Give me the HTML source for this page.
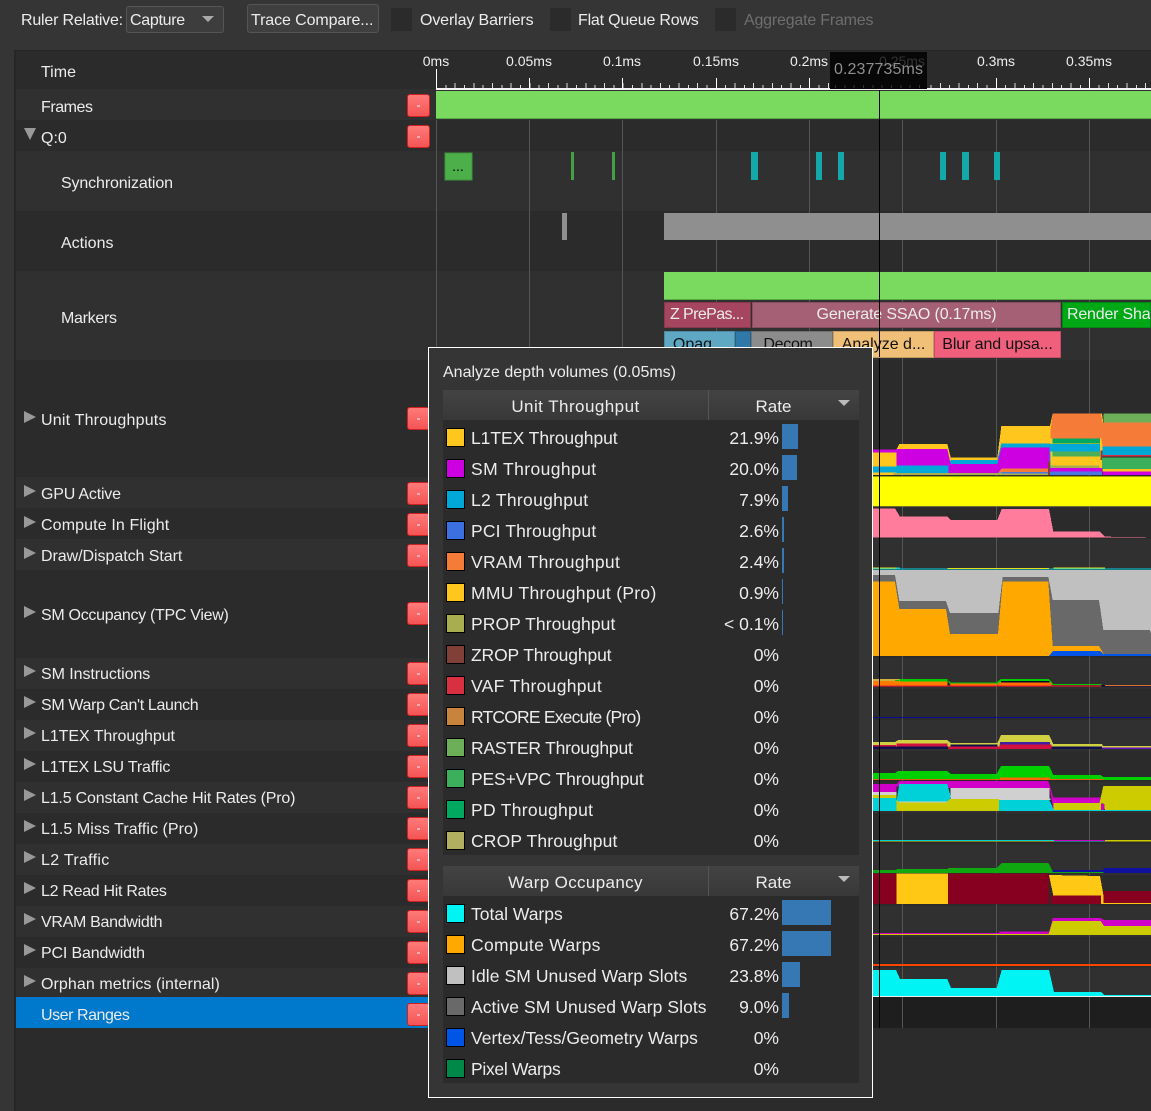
<!DOCTYPE html>
<html><head><meta charset="utf-8"><style>
html,body{margin:0;padding:0;background:#353535;width:1151px;height:1111px;overflow:hidden;font-family:"Liberation Sans",sans-serif;font-size:16px;color:#ececec}
#p{position:absolute;left:0;top:0;width:1151px;height:1111px;overflow:hidden}
#p div,#p span.a{position:absolute;white-space:nowrap}
.l{height:24px;line-height:24px;margin-top:2px}
.t{height:20px;line-height:20px;font-size:14px;width:80px;text-align:center;margin-left:-40px;color:#eee}
.b{left:407px;width:21px;height:21px;background:linear-gradient(#ff7a7a,#f45454);border:1px solid #c22;border-radius:3px;color:#fff;font-size:12px;text-align:center;line-height:20px}
.ar{left:24px;width:0;height:0;border-left:12px solid #999;border-top:6px solid transparent;border-bottom:6px solid transparent}
.m{height:26px;line-height:24px;text-align:center;overflow:hidden;box-sizing:border-box;border:1px solid rgba(0,0,0,.18)}
.h{height:30px;line-height:33px;background:linear-gradient(#434343,#383838);text-align:center;border-right:1px solid #555;box-sizing:border-box;font-size:17px}
.s{left:446px;width:17px;height:17px;border:1px solid #000}
.r{left:471px;height:24px;line-height:24px;font-size:17.5px}
.v{left:680px;width:99px;text-align:right;height:24px;line-height:24px;font-size:17.5px}
.g{left:782px;height:25px;background:#3578b4}
.tri{width:0;height:0;border-top:6px solid #bbb;border-left:6.5px solid transparent;border-right:6.5px solid transparent}
.cb{top:8px;width:21px;height:23px;background:#2b2b2b}
</style></head><body><div id="p">
<svg style="position:absolute;left:0;top:0" width="1151" height="1111" shape-rendering="crispEdges">
<rect width="1151" height="1111" fill="#353535"/>
<rect x="15" y="50" width="1136" height="1061" fill="#2b2b2b"/>
<rect x="14" y="50" width="2" height="1061" fill="#262626"/>
<rect x="15" y="50" width="1136" height="1" fill="#242424"/>
<g fill="#303030">
<rect x="16" y="89" width="1135" height="31"/><rect x="16" y="151" width="1135" height="60"/><rect x="16" y="271" width="1135" height="89"/>
<rect x="16" y="477" width="1135" height="31"/><rect x="16" y="539" width="1135" height="31"/><rect x="16" y="658" width="1135" height="31"/>
<rect x="16" y="720" width="1135" height="31"/><rect x="16" y="782" width="1135" height="31"/><rect x="16" y="844" width="1135" height="31"/>
<rect x="16" y="906" width="1135" height="31"/><rect x="16" y="968" width="1135" height="29"/>
</g>
<rect x="16" y="997" width="420" height="31" fill="#0078cc"/>
<rect x="436" y="997" width="715" height="31" fill="#1e1e1e"/>
<g fill="#555"><rect x="436" y="120" width="1" height="908"/><rect x="529" y="120" width="1" height="908"/><rect x="622" y="120" width="1" height="908"/><rect x="716" y="120" width="1" height="908"/><rect x="809" y="120" width="1" height="908"/><rect x="902" y="120" width="1" height="908"/><rect x="996" y="120" width="1" height="908"/><rect x="1089" y="120" width="1" height="908"/></g>
<!-- ruler -->
<rect x="436" y="88" width="715" height="2" fill="#f4f4f4"/>
<line x1="445.33" x2="1151" y1="86.5" y2="86.5" stroke="#ddd" stroke-width="3" stroke-dasharray="1 17.66"/>
<line x1="454.66" x2="1151" y1="85.5" y2="85.5" stroke="#ddd" stroke-width="5" stroke-dasharray="1 17.66"/>
<g fill="#fff"><rect x="436" y="69" width="1" height="20"/><rect x="529" y="78" width="1" height="11"/><rect x="622" y="78" width="1" height="11"/><rect x="716" y="78" width="1" height="11"/><rect x="809" y="78" width="1" height="11"/><rect x="902" y="78" width="1" height="11"/><rect x="996" y="78" width="1" height="11"/><rect x="1089" y="78" width="1" height="11"/></g>
<!-- frames -->
<rect x="436" y="91" width="715" height="28" fill="#7ad95f"/><rect x="436" y="118" width="715" height="1" fill="#55ab42"/>
<!-- sync -->
<rect x="445" y="153" width="27" height="27" fill="#4caf4a" stroke="#3d953d"/>
<rect x="571" y="152" width="3" height="28" fill="#44a044"/><rect x="612" y="152" width="3" height="28" fill="#44a044"/>
<g fill="#15a8a8"><rect x="751" y="152" width="7" height="28"/><rect x="816" y="152" width="6" height="28"/><rect x="838" y="152" width="6" height="28"/><rect x="940" y="152" width="6" height="28"/><rect x="962" y="152" width="7" height="28"/><rect x="994" y="152" width="6" height="28"/></g>
<!-- actions -->
<rect x="562" y="213" width="5" height="27" fill="#8f8f8f"/><rect x="664" y="213" width="487" height="27" fill="#8f8f8f"/>
<rect x="664" y="272" width="487" height="28" fill="#7ad95f"/><rect x="664" y="299" width="487" height="1" fill="#55ab42"/>
<!-- charts: zoom 4 -->
<g transform="translate(860 290) scale(.33333)">
<rect x="38" y="478" width="72" height="10" fill="#cc00e0"/><rect x="38" y="487" width="72" height="44" fill="#ffc61e"/><rect x="38" y="530" width="72" height="19" fill="#00a8d8"/><rect x="38" y="548" width="72" height="7" fill="#ffc61e"/>
<polygon fill="#ffc61e" points="110,477 118,462 262,462 272,502 412,502 424,408 570,408 578,370 726,370 730,400 726,545 110,550"/>
<polygon fill="#00a8d8" points="110,555 110,527 265,527 272,510 412,510 424,460 572,460 572,555"/>
<polygon fill="#cc00e0" points="110,477 262,477 272,522 412,522 424,473 568,473 568,555 110,527"/>
<rect x="110" y="527" width="155" height="22" fill="#00a8d8"/>
<rect x="265" y="522" width="150" height="27" fill="#cc00e0"/>
<polygon fill="#f47c38" points="415,548 425,535 566,535 566,548"/>
<rect x="100" y="549" width="470" height="6" fill="#a8ae50"/>
<rect x="425" y="546" width="142" height="5" fill="#4a78e0"/>
<polygon fill="#f47c38" points="572,420 578,370 722,370 728,398 873,398 873,470 728,470 724,445 572,445"/>
<rect x="730" y="370" width="143" height="27" fill="#6caf58"/>
<rect x="578" y="445" width="142" height="15" fill="#00a860"/>
<rect x="572" y="462" width="148" height="23" fill="#00a8d8"/>
<rect x="578" y="485" width="142" height="15" fill="#4caf58"/>
<rect x="574" y="503" width="146" height="23" fill="#ffc61e"/>
<rect x="572" y="526" width="146" height="8" fill="#a8ae50"/>
<rect x="570" y="534" width="156" height="12" fill="#cc00e0"/>
<rect x="572" y="545" width="154" height="10" fill="#4a78e0"/>
<rect x="564" y="515" width="6" height="40" fill="#804038"/>
<rect x="722" y="482" width="5" height="28" fill="#804038"/>
<rect x="728" y="470" width="145" height="25" fill="#00a8d8"/>
<rect x="728" y="495" width="145" height="5" fill="#d83040"/>
<rect x="726" y="503" width="147" height="34" fill="#3caf5c"/>
<rect x="728" y="537" width="145" height="8" fill="#ffc61e"/>
<rect x="728" y="545" width="145" height="10" fill="#cc00e0"/>
<rect x="38" y="558" width="835" height="92" fill="#ffff00"/><rect x="38" y="558" width="835" height="2" fill="#444400"/><rect x="38" y="648" width="835" height="2" fill="#aaaa20"/>
<polygon fill="#ff7c9c" points="38,655 105,655 120,680 262,680 272,690 412,690 425,657 567,657 580,725 720,725 735,740 873,742 873,743 38,743"/>
</g>
<g transform="translate(860 550) scale(.33333)">
<rect x="38" y="55" width="835" height="3" fill="#00d0e0"/><rect x="38" y="52" width="72" height="4" fill="#e0e020"/><rect x="262" y="54" width="305" height="3" fill="#e0e020"/><rect x="580" y="52" width="155" height="3" fill="#e0e020"/><rect x="110" y="53" width="10" height="3" fill="#00d0e0"/>
<rect x="38" y="60" width="835" height="258" fill="#c0c0c0"/>
<polygon fill="#696969" points="38,75 105,75 118,153 258,153 270,189 415,189 428,81 565,81 578,150 717,150 730,240 870,240 873,250 873,318 38,318"/>
<polygon fill="#ffa800" points="38,95 105,95 118,177 258,177 270,252 414,252 428,95 565,95 578,288 717,288 730,310 730,318 38,318"/>
<polygon fill="#0055e6" points="566,318 580,303 720,303 730,312 873,312 873,318"/>
<rect x="38" y="387" width="80" height="7" fill="#d0b040"/>
<rect x="38" y="393" width="225" height="13" fill="#ff7c00"/>
<rect x="105" y="390" width="12" height="3" fill="#00cc00"/>
<rect x="118" y="387" width="144" height="8" fill="#00cc00"/>
<polygon fill="#00cc00" points="262,390 272,397 410,397 423,387 567,387 580,402 725,402 725,405 272,405"/>
<rect x="272" y="400" width="140" height="6" fill="#ff7000"/>
<rect x="423" y="393" width="145" height="5" fill="#08082c"/>
<rect x="415" y="398" width="160" height="8" fill="#ff7000"/>
<rect x="38" y="406" width="688" height="4" fill="#ff1030"/>
<rect x="262" y="402" width="4" height="4" fill="#08082c"/>
<rect x="724" y="405" width="11" height="5" fill="#08082c"/>
<rect x="735" y="405" width="138" height="3" fill="#e07030"/><rect x="735" y="408" width="138" height="2" fill="#10104c"/>
<rect x="38" y="501" width="835" height="3" fill="#0a0a9a"/>
</g>
<g transform="translate(860 720) scale(.33333)">
<polygon fill="#d0d040" points="38,66 105,66 115,60 262,60 272,69 412,69 423,45 567,45 580,72 725,72 730,78 873,78 873,87 38,87"/>
<rect x="38" y="75" width="70" height="6" fill="#d01040"/><rect x="38" y="80" width="226" height="7" fill="#10104c"/>
<rect x="110" y="71" width="152" height="8" fill="#d01040"/>
<rect x="272" y="74" width="140" height="7" fill="#10104c"/><rect x="264" y="80" width="310" height="7" fill="#d01040"/>
<rect x="420" y="66" width="150" height="9" fill="#4020a0"/><rect x="418" y="74" width="156" height="8" fill="#d01040"/>
<rect x="574" y="80" width="152" height="7" fill="#10104c"/><rect x="726" y="82" width="147" height="5" fill="#6010c0"/>
<polygon fill="#00d000" points="38,159 105,159 115,153 262,153 272,162 410,162 423,138 567,138 580,165 722,165 730,171 873,171 873,180 38,180"/>
<rect x="38" y="177" width="692" height="3" fill="#e06010"/><rect x="420" y="173" width="150" height="7" fill="#ff6600"/>
<rect x="38" y="192" width="72" height="24" fill="#d000c8"/><rect x="38" y="216" width="72" height="9" fill="#d0d0d0"/><rect x="38" y="225" width="72" height="9" fill="#cccc00"/><rect x="38" y="234" width="72" height="39" fill="#00d0d8"/>
<polygon fill="#d000c8" points="110,192 118,183 565,183 580,232 720,232 722,270 580,270 570,210 110,200"/>
<polygon fill="#00d0d8" points="110,240 118,192 262,192 272,230 265,248 110,248"/>
<rect x="110" y="245" width="155" height="5" fill="#d0d0d0"/>
<polygon fill="#cccc00" points="110,240 118,248 258,248 270,237 417,237 417,273 110,273"/>
<rect x="272" y="204" width="296" height="33" fill="#d0d0d0"/><rect x="417" y="236" width="155" height="4" fill="#d0d0d0"/>
<polygon fill="#00d0d8" points="417,240 568,240 582,270 582,273 417,273"/>
<rect x="580" y="249" width="143" height="21" fill="#cccc00"/>
<polygon fill="#cccc00" points="718,250 730,198 873,198 873,270 735,270 730,250"/>
<rect x="723" y="252" width="10" height="18" fill="#d000c8"/>
<rect x="570" y="270" width="303" height="3" fill="#00d0d8"/>
<rect x="38" y="360" width="544" height="3" fill="#00d0d8"/><rect x="38" y="363" width="544" height="2" fill="#cccc00"/><rect x="582" y="360" width="153" height="3" fill="#d000c8"/><rect x="582" y="363" width="153" height="2" fill="#10c0c0"/><rect x="735" y="360" width="138" height="5" fill="#cccc00"/>
</g>
<g transform="translate(860 860) scale(.33333)">
<polygon fill="#10a810" points="38,30 110,30 110,27 264,27 264,24 410,24 425,9 565,9 578,33 730,36 730,39 38,39"/>
<rect x="578" y="30" width="152" height="6" fill="#1010a0"/><rect x="730" y="24" width="143" height="15" fill="#1010a0"/>
<rect x="38" y="40" width="529" height="92" fill="#880020"/>
<rect x="110" y="40" width="154" height="92" fill="#ffc814"/>
<polygon fill="#ffc814" points="567,45 720,48 735,132 723,132 723,107 580,107"/>
<rect x="573" y="107" width="150" height="25" fill="#880020"/>
<rect x="730" y="93" width="143" height="36" fill="#880020"/><rect x="735" y="129" width="138" height="3" fill="#ffc814"/>
<rect x="38" y="222" width="835" height="3" fill="#cccc00"/><rect x="38" y="219" width="380" height="3" fill="#d000c8"/>
<rect x="417" y="215" width="150" height="7" fill="#d000c8"/>
<polygon fill="#d000c8" points="566,222 578,174 722,174 732,180 873,180 873,198 732,198 722,183 578,183 570,222"/>
<polygon fill="#cccc00" points="566,222 578,183 722,183 732,198 873,198 873,225 566,225"/>
<rect x="38" y="312" width="835" height="6" fill="#ff4400"/>
<polygon fill="#00f4f4" points="38,330 108,330 120,357 262,357 273,384 410,384 425,330 567,330 582,396 723,396 733,405 873,405 873,408 38,408"/>
<rect x="38" y="408" width="835" height="3" fill="#eee"/>
</g>
<rect x="879" y="90" width="1" height="938" fill="#000"/>
<rect x="830" y="52" width="97" height="37" fill="#070707"/>
<line x1="835" x2="927" y1="86.5" y2="86.5" stroke="#333" stroke-width="3" stroke-dasharray="1 8.33"/>
</svg>

<div class="t" style="left:436px;top:51px">0ms</div><div class="t" style="left:529px;top:51px">0.05ms</div><div class="t" style="left:622px;top:51px">0.1ms</div><div class="t" style="left:716px;top:51px">0.15ms</div><div class="t" style="left:809px;top:51px">0.2ms</div><div class="t" style="left:902px;top:51px;color:#333">0.25ms</div><div class="t" style="left:996px;top:51px">0.3ms</div><div class="t" style="left:1089px;top:51px">0.35ms</div>
<div class="l" style="left:834px;top:56px;color:#8f8f8f;font-size:16px;letter-spacing:.1px">0.237735ms</div>

<!-- toolbar -->
<div class="l" style="left:21px;top:7px;letter-spacing:-.2px">Ruler Relative:</div>
<div style="left:126px;top:6px;width:96px;height:25px;background:#3d3d3d;border:1px solid #555;border-radius:3px"></div>
<div class="l" style="left:130px;top:7px;letter-spacing:-.3px">Capture</div>
<div class="tri" style="left:202px;top:16px;border-top-color:#aaa"></div>
<div style="left:247px;top:4px;width:130px;height:27px;background:#3f3f3f;border:1px solid #555;border-radius:3px"></div>
<div class="l" style="left:251px;top:7px;letter-spacing:-.1px">Trace Compare...</div>
<div class="cb" style="left:391px"></div><div class="l" style="left:420px;top:7px;letter-spacing:-.13px">Overlay Barriers</div>
<div class="cb" style="left:550px"></div><div class="l" style="left:578px;top:7px;letter-spacing:-.2px">Flat Queue Rows</div>
<div class="cb" style="left:715px"></div><div class="l" style="left:744px;top:7px;color:#6e6e6e;letter-spacing:-.2px">Aggregate Frames</div>

<!-- sync text -->
<div style="left:444px;top:154px;width:28px;text-align:center;color:#000;font-size:14px;line-height:24px">...</div>

<!-- markers -->
<div class="m" style="left:664px;top:302px;width:87px;background:#a5455f;text-align:left;padding-left:5px;letter-spacing:-.6px">Z PrePas...</div>
<div class="m" style="left:752px;top:302px;width:309px;background:#a56075;letter-spacing:-.15px">Generate SSAO (0.17ms)</div>
<div class="m" style="left:1062px;top:302px;width:89px;background:#00a816;text-align:left;padding-left:4px;letter-spacing:-.2px">Render Shac</div>
<div class="m" style="left:664px;top:331px;width:71px;background:#5fa8c4;color:#111;line-height:26px;height:27px;padding-right:14px">Opaq</div>
<div class="m" style="left:735px;top:331px;width:16px;background:#3078a8;height:27px"></div>
<div class="m" style="left:751px;top:331px;width:82px;background:#8c8c8c;color:#111;line-height:26px;height:27px;padding-right:8px;letter-spacing:-.3px">Decom</div>
<div class="m" style="left:833px;top:331px;width:101px;background:#f0c078;color:#111;line-height:26px;height:27px">Analyze d...</div>
<div class="m" style="left:934px;top:331px;width:127px;background:#f0607c;color:#111;line-height:26px;height:27px;letter-spacing:-.1px">Blur and upsa...</div>
<div style="left:879px;top:302px;width:1px;height:55px;background:#000"></div>

<!-- row labels -->
<div class="l" style="left:41px;top:59px">Time</div>
<div class="l" style="left:41px;top:94px;letter-spacing:-.45px">Frames</div><div class="b" style="top:94px">-</div>
<div class="l" style="left:41px;top:125px">Q:0</div><div class="b" style="top:125px">-</div>
<div style="left:24px;top:128px;width:0;height:0;border-top:12px solid #999;border-left:6px solid transparent;border-right:6px solid transparent"></div>
<div class="l" style="left:61px;top:170px;letter-spacing:-.13px">Synchronization</div>
<div class="l" style="left:61px;top:230px">Actions</div>
<div class="l" style="left:61px;top:305px;letter-spacing:-.3px">Markers</div>

<div class="ar" style="top:411px"></div><div class="l" style="left:41px;top:407px;letter-spacing:.2px">Unit Throughputs</div><div class="b" style="top:407px">-</div>
<div class="ar" style="top:485px"></div><div class="l" style="left:41px;top:481px;letter-spacing:-.2px">GPU Active</div><div class="b" style="top:482px">-</div>
<div class="ar" style="top:516px"></div><div class="l" style="left:41px;top:512px;letter-spacing:.12px">Compute In Flight</div><div class="b" style="top:513px">-</div>
<div class="ar" style="top:547px"></div><div class="l" style="left:41px;top:543px;letter-spacing:-.05px">Draw/Dispatch Start</div><div class="b" style="top:544px">-</div>
<div class="ar" style="top:606px"></div><div class="l" style="left:41px;top:602px;letter-spacing:-.3px">SM Occupancy (TPC View)</div><div class="b" style="top:602px">-</div>
<div class="ar" style="top:665px"></div><div class="l" style="left:41px;top:661px;letter-spacing:-.07px">SM Instructions</div><div class="b" style="top:662px">-</div>
<div class="ar" style="top:696px"></div><div class="l" style="left:41px;top:692px;letter-spacing:-.35px">SM Warp Can't Launch</div><div class="b" style="top:693px">-</div>
<div class="ar" style="top:727px"></div><div class="l" style="left:41px;top:723px;letter-spacing:-.06px">L1TEX Throughput</div><div class="b" style="top:724px">-</div>
<div class="ar" style="top:758px"></div><div class="l" style="left:41px;top:754px;letter-spacing:-.18px">L1TEX LSU Traffic</div><div class="b" style="top:755px">-</div>
<div class="ar" style="top:789px"></div><div class="l" style="left:41px;top:785px;letter-spacing:-.18px">L1.5 Constant Cache Hit Rates (Pro)</div><div class="b" style="top:786px">-</div>
<div class="ar" style="top:820px"></div><div class="l" style="left:41px;top:816px;letter-spacing:.05px">L1.5 Miss Traffic (Pro)</div><div class="b" style="top:817px">-</div>
<div class="ar" style="top:851px"></div><div class="l" style="left:41px;top:847px;letter-spacing:.3px">L2 Traffic</div><div class="b" style="top:848px">-</div>
<div class="ar" style="top:882px"></div><div class="l" style="left:41px;top:878px;letter-spacing:-.3px">L2 Read Hit Rates</div><div class="b" style="top:879px">-</div>
<div class="ar" style="top:913px"></div><div class="l" style="left:41px;top:909px;letter-spacing:-.3px">VRAM Bandwidth</div><div class="b" style="top:910px">-</div>
<div class="ar" style="top:944px"></div><div class="l" style="left:41px;top:940px;letter-spacing:-.15px">PCI Bandwidth</div><div class="b" style="top:941px">-</div>
<div class="ar" style="top:975px"></div><div class="l" style="left:41px;top:971px;letter-spacing:.08px">Orphan metrics (internal)</div><div class="b" style="top:972px">-</div>
<div class="l" style="left:41px;top:1002px;letter-spacing:-.45px">User Ranges</div><div class="b" style="top:1003px">-</div>

<!-- popup -->
<div style="left:428px;top:347px;width:443px;height:749px;background:#353535;border:1px solid #fff"></div>
<div class="l" style="left:443px;top:359px">Analyze depth volumes (0.05ms)</div>

<div style="left:443px;top:390px;width:416px;height:465px;background:#2b2b2b"></div>
<div class="h" style="left:443px;top:390px;width:266px;letter-spacing:.45px">Unit Throughput</div>
<div class="h" style="left:709px;top:390px;width:150px;border-right:0;padding-right:21px">Rate</div>
<div class="tri" style="left:838px;top:400px"></div>

<div class="s" style="top:428px;background:#ffc61e"></div><div class="r" style="top:426px;letter-spacing:-.06px">L1TEX Throughput</div><div class="v" style="top:426px">21.9%</div><div class="g" style="top:424px;width:16px"></div>
<div class="s" style="top:459px;background:#cc00e0"></div><div class="r" style="top:457px;letter-spacing:.4px">SM Throughput</div><div class="v" style="top:457px">20.0%</div><div class="g" style="top:455px;width:15px"></div>
<div class="s" style="top:490px;background:#00a8d8"></div><div class="r" style="top:488px;letter-spacing:.3px">L2 Throughput</div><div class="v" style="top:488px">7.9%</div><div class="g" style="top:486px;width:6px"></div>
<div class="s" style="top:521px;background:#3c70e0"></div><div class="r" style="top:519px;letter-spacing:.15px">PCI Throughput</div><div class="v" style="top:519px">2.6%</div><div class="g" style="top:517px;width:2px"></div>
<div class="s" style="top:552px;background:#f47c38"></div><div class="r" style="top:550px;letter-spacing:.3px">VRAM Throughput</div><div class="v" style="top:550px">2.4%</div><div class="g" style="top:548px;width:2px"></div>
<div class="s" style="top:583px;background:#ffc61e"></div><div class="r" style="top:581px;letter-spacing:.3px">MMU Throughput (Pro)</div><div class="v" style="top:581px">0.9%</div><div class="g" style="top:579px;width:1px"></div>
<div class="s" style="top:614px;background:#a8ae50"></div><div class="r" style="top:612px;letter-spacing:.07px">PROP Throughput</div><div class="v" style="top:612px">&lt; 0.1%</div><div class="g" style="top:610px;width:1px"></div>
<div class="s" style="top:645px;background:#804038"></div><div class="r" style="top:643px;letter-spacing:-.13px">ZROP Throughput</div><div class="v" style="top:643px">0%</div>
<div class="s" style="top:676px;background:#d83040"></div><div class="r" style="top:674px;letter-spacing:.3px">VAF Throughput</div><div class="v" style="top:674px">0%</div>
<div class="s" style="top:707px;background:#c8843c"></div><div class="r" style="top:705px;letter-spacing:-.8px">RTCORE Execute (Pro)</div><div class="v" style="top:705px">0%</div>
<div class="s" style="top:738px;background:#6caf58"></div><div class="r" style="top:736px;letter-spacing:-.2px">RASTER Throughput</div><div class="v" style="top:736px">0%</div>
<div class="s" style="top:769px;background:#3caf5c"></div><div class="r" style="top:767px;letter-spacing:-.15px">PES+VPC Throughput</div><div class="v" style="top:767px">0%</div>
<div class="s" style="top:800px;background:#00a860"></div><div class="r" style="top:798px;letter-spacing:.3px">PD Throughput</div><div class="v" style="top:798px">0%</div>
<div class="s" style="top:831px;background:#b0b060"></div><div class="r" style="top:829px;letter-spacing:.15px">CROP Throughput</div><div class="v" style="top:829px">0%</div>

<div style="left:443px;top:866px;width:416px;height:217px;background:#2b2b2b"></div>
<div class="h" style="left:443px;top:866px;width:266px;letter-spacing:.35px">Warp Occupancy</div>
<div class="h" style="left:709px;top:866px;width:150px;border-right:0;padding-right:21px">Rate</div>
<div class="tri" style="left:838px;top:876px"></div>

<div class="s" style="top:904px;background:#00f4f4"></div><div class="r" style="top:902px">Total Warps</div><div class="v" style="top:902px">67.2%</div><div class="g" style="top:900px;width:49px"></div>
<div class="s" style="top:935px;background:#ffa800"></div><div class="r" style="top:933px;letter-spacing:.3px">Compute Warps</div><div class="v" style="top:933px">67.2%</div><div class="g" style="top:931px;width:49px"></div>
<div class="s" style="top:966px;background:#c0c0c0"></div><div class="r" style="top:964px;letter-spacing:.08px">Idle SM Unused Warp Slots</div><div class="v" style="top:964px">23.8%</div><div class="g" style="top:962px;width:18px"></div>
<div class="s" style="top:997px;background:#696969"></div><div class="r" style="top:995px;letter-spacing:.07px">Active SM Unused Warp Slots</div><div class="v" style="top:995px">9.0%</div><div class="g" style="top:993px;width:7px"></div>
<div class="s" style="top:1028px;background:#0055e6"></div><div class="r" style="top:1026px">Vertex/Tess/Geometry Warps</div><div class="v" style="top:1026px">0%</div>
<div class="s" style="top:1059px;background:#008848"></div><div class="r" style="top:1057px;letter-spacing:-.3px">Pixel Warps</div><div class="v" style="top:1057px">0%</div>
</div></body></html>
